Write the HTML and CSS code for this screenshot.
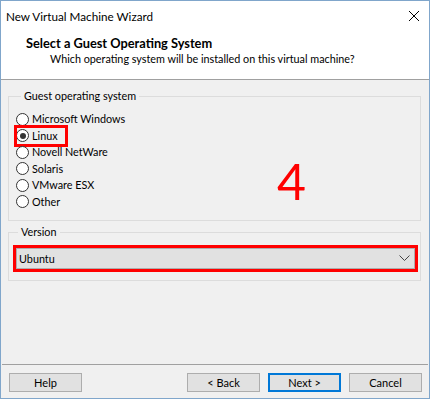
FILE: index.html
```html
<!DOCTYPE html>
<html lang="en">
<head>
  <meta charset="UTF-8">
  <title>New Virtual Machine Wizard</title>
  <link rel="stylesheet" href="styles.css">
</head>
<body>
  <div class="window">
    <div class="titlebar">
      <span class="title">New Virtual Machine Wizard</span>
      <svg class="close" width="12" height="12" viewBox="0 0 12 12">
        <path d="M1 1 L11 11 M11 1 L1 11" stroke="#000" stroke-width="1" fill="none"/>
      </svg>
    </div>

    <div class="header">
      <div class="head-title">Select a Guest Operating System</div>
      <div class="head-sub">Which operating system will be installed on this virtual machine?</div>
    </div>

    <div class="content">
      <fieldset class="group guest">
        <legend>Guest operating system</legend>
        <ul class="radios">
          <li><span class="radio"></span>Microsoft Windows</li>
          <li class="marked"><span class="radio checked"></span>Linux</li>
          <li><span class="radio"></span>Novell NetWare</li>
          <li><span class="radio"></span>Solaris</li>
          <li><span class="radio"></span>VMware ESX</li>
          <li><span class="radio"></span>Other</li>
        </ul>
        <!-- annotation number -->
        <div class="step">4</div>
      </fieldset>

      <fieldset class="group version">
        <legend>Version</legend>
        <div class="red-box">
          <div class="combo">
            <span>Ubuntu</span>
            <svg width="11" height="7" viewBox="0 0 11 7">
              <path d="M0.5 0.5 L5.5 5.5 L10.5 0.5" stroke="#444" stroke-width="1" fill="none"/>
            </svg>
          </div>
        </div>
      </fieldset>
    </div>

    <div class="footer">
      <button class="btn">Help</button>
      <div class="spacer"></div>
      <button class="btn">&lt; Back</button>
      <button class="btn default">Next &gt;</button>
      <button class="btn">Cancel</button>
    </div>
  </div>
</body>
</html>
```

FILE: styles.css
```css
body{
  margin: 0;
  background-color: #ffffff;
  font-family: Lato, "Liberation Sans", sans-serif;
  font-size: 10.8px;
  color: #000000;
}

.window{
  width: 430px;
  height: 399px;
  box-sizing: border-box;
  border: 1px solid #80a6cb;
  background-color: #f0f0f0;
  display: flex;
  flex-direction: column;
}

.titlebar{
  height: 30px;
  background-color: #ffffff;
  display: flex;
  align-items: center;
  justify-content: space-between;
  padding: 0 9px 0 5px;
  font-size: 11.7px;
}

.header{
  height: 49px;
  box-sizing: border-box;
  background-color: #ffffff;
  border-bottom: 1px solid #a0a0a0;
  padding-top: 4px;
}

.head-title{
  font-weight: bold;
  font-size: 12.8px;
  line-height: 16px;
  padding-left: 25px;
}

.head-sub{
  line-height: 16px;
  padding-left: 49px;
}

.content{
  flex: 1;
  padding: 8px 8px 0 7px;
}

.group{
  margin: 0;
  padding: 0;
  border: 1px solid #dcdcdc;
  position: relative;
}

.group legend{
  margin-left: 5px;
  padding: 0 3px;
  line-height: 16px;
}

.guest{
  padding: 7px 0 10px 7px;
}

.radios{
  margin: 0;
  padding: 0;
  list-style-type: none;
}

.radios li{
  height: 16.5px;
  line-height: 16.5px;
  display: flex;
  align-items: center;
  position: relative;
}

.radio{
  width: 11px;
  height: 11px;
  border: 1px solid #333333;
  border-radius: 50%;
  background-color: #ffffff;
  margin-right: 3px;
  display: flex;
  align-items: center;
  justify-content: center;
}

.radio.checked::after{
  content: "";
  width: 6px;
  height: 6px;
  border-radius: 50%;
  background-color: #333333;
}

/* red mark round the Linux choice */
.marked::before{
  content: "";
  position: absolute;
  left: -2px;
  top: -3px;
  width: 48px;
  height: 16px;
  border: 3px solid #ff0000;
}

.step{
  position: absolute;
  left: 268px;
  top: 52px;
  font-size: 50px;
  line-height: 50px;
  color: #ff0000;
}

.version{
  margin-top: 3px;
  padding: 5px 2px 8px 4px;
}

.red-box{
  border: 3px solid #ff0000;
}

.combo{
  height: 21px;
  box-sizing: border-box;
  border: 1px solid #adadad;
  background-color: #e1e1e1;
  display: flex;
  align-items: center;
  justify-content: space-between;
  padding: 0 4px 0 2px;
}

.footer{
  border-top: 1px solid #a0a0a0;
  margin: 0 1px;
  padding: 8px 6px 6px 7px;
  display: flex;
  gap: 8px;
}

.spacer{
  flex: 1;
}

.btn{
  width: 73px;
  height: 19px;
  box-sizing: border-box;
  border: 1px solid #adadad;
  background-color: #e1e1e1;
  font-family: inherit;
  font-size: 11px;
  padding: 0;
  color: #000000;
}

.btn.default{
  border: 2px solid #0078d7;
}
```
